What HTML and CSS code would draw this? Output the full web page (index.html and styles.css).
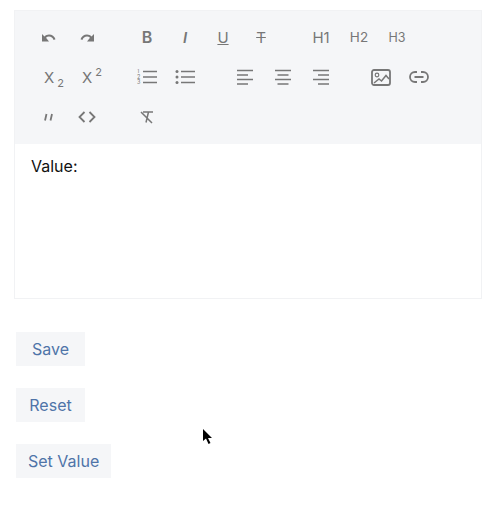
FILE: index.html
```html
<!DOCTYPE html>
<html>
  <head>
    <title>Editor</title>
    <link rel="stylesheet" href="styles.css">
  </head>

  <body>
    <div class="editor">
      <div class="toolbar">
        <!-- history -->
        <div class="group">
          <span class="tool">
            <svg width="16" height="12" viewBox="0 0 16 12"><path d="M1 10.500V3l2.500 2.400C4.800 4.200 6.300 3.500 8 3.500c3 0 5.500 1.900 6.500 4.800l-1.900.7C11.900 6.900 10.100 5.500 8 5.500c-1.200 0-2.200.4-3 1.200l3 3.800z"/></svg>
          </span>
          <span class="tool">
            <svg width="16" height="12" viewBox="0 0 16 12"><path d="M15 10.500V3l-2.500 2.400C11.200 4.200 9.700 3.500 8 3.500c-3 0-5.500 1.900-6.500 4.800l1.900.7C4.100 6.900 5.900 5.500 8 5.500c1.200 0 2.200.4 3 1.200l-3 3.800z"/></svg>
          </span>
        </div>
        <!-- text marks -->
        <div class="group">
          <span class="tool bold">B</span>
          <span class="tool italic">I</span>
          <span class="tool under">U</span>
          <span class="tool strike">T</span>
        </div>
        <!-- headings -->
        <div class="group">
          <span class="tool h1">H1</span>
          <span class="tool h2">H2</span>
          <span class="tool h3">H3</span>
        </div>
        <!-- scripts -->
        <div class="group">
          <span class="tool script"><span>X<span class="sub">2</span></span></span>
          <span class="tool script"><span>X<span class="sup">2</span></span></span>
        </div>
        <!-- lists -->
        <div class="group">
          <span class="tool">
            <svg width="20" height="16" viewBox="0 0 20 16">
              <path class="line" d="M6 2.500h14M6 8h14M6 13.500h14"/>
              <text class="num" x="0" y="4">1</text>
              <text class="num" x="0" y="9.500">2</text>
              <text class="num" x="0" y="15">3</text>
            </svg>
          </span>
          <span class="tool">
            <svg width="20" height="16" viewBox="0 0 20 16">
              <path class="line" d="M6 2.500h14M6 8h14M6 13.500h14"/>
              <circle cx="2" cy="2.500" r="1.500"/>
              <circle cx="2" cy="8" r="1.500"/>
              <circle cx="2" cy="13.500" r="1.500"/>
            </svg>
          </span>
        </div>
        <!-- align -->
        <div class="group">
          <span class="tool">
            <svg width="16" height="16" viewBox="0 0 16 16"><path class="line" d="M0 1.500h16M0 6h11M0 10.500h16M0 15h11"/></svg>
          </span>
          <span class="tool">
            <svg width="16" height="16" viewBox="0 0 16 16"><path class="line" d="M0 1.500h16M2.500 6h11M0 10.500h16M2.500 15h11"/></svg>
          </span>
          <span class="tool">
            <svg width="16" height="16" viewBox="0 0 16 16"><path class="line" d="M0 1.500h16M5 6h11M0 10.500h16M5 15h11"/></svg>
          </span>
        </div>
        <!-- image and link -->
        <div class="group">
          <span class="tool">
            <svg width="20" height="17" viewBox="0 0 20 17">
              <rect class="line heavy" x="1" y="1" width="18" height="15" rx="2"/>
              <circle class="line thin" cx="6" cy="6" r="1.800"/>
              <path class="line" d="M3 14l5-4 2.500 2L15 6.500l3 3.500"/>
            </svg>
          </span>
          <span class="tool">
            <svg width="20" height="14" viewBox="0 0 20 14">
              <path class="line heavy" d="M8 2H6a5 5 0 0 0 0 10h2M12 2h2a5 5 0 0 1 0 10h-2M5.500 7h9"/>
            </svg>
          </span>
        </div>
        <!-- quote and code -->
        <div class="group">
          <span class="tool">
            <svg width="10" height="8" viewBox="0 0 10 8"><path class="line heavy" d="M2.500 1L1 7.500M8 1L6.500 7.500"/></svg>
          </span>
          <span class="tool">
            <svg width="18" height="12" viewBox="0 0 18 12"><path class="line heavy" d="M6.500 1L1.500 6l5 5M11.500 1l5 5-5 5"/></svg>
          </span>
        </div>
        <!-- clear format -->
        <div class="group">
          <span class="tool">
            <svg width="14" height="14" viewBox="0 0 14 14">
              <path class="line" d="M3 2h10M8.500 2L6 12.500M1 2l11 11"/>
            </svg>
          </span>
        </div>
      </div>
      <div class="content">Value:</div>
    </div>

    <div class="actions">
      <button class="btn">Save</button>
      <button class="btn">Reset</button>
      <button class="btn">Set Value</button>
    </div>

    <svg class="cursor" width="11" height="16" viewBox="0 0 11 16"><path d="M0 0v12l3-2.500L5.500 15l2-1-2.500-5h4z"/></svg>
  </body>
</html>
```

FILE: styles.css
```css
body {
  margin: 0;
  padding: 10px 16px 0 14px;
  font-family: Inter, "Liberation Sans", sans-serif;
  background-color: #fff;
}

.editor {
  border: 1px solid #f1f2f4;
  height: 287px;
}

.toolbar {
  display: flex;
  flex-wrap: wrap;
  background-color: #f5f6f8;
  padding: 6px 0 7px 15px;
  height: 120px;
}

.group {
  display: flex;
  margin-right: 22px;
}

.tool {
  display: flex;
  align-items: center;
  justify-content: center;
  width: 38px;
  height: 40px;
  color: #777;
  font-size: 15px;
}

.tool svg {
  fill: #777;
}

.tool .line {
  fill: none;
  stroke: #777;
  stroke-width: 1.5;
}

.tool .heavy {
  stroke-width: 1.8;
}

.tool .thin {
  stroke-width: 1.2;
}

.tool .num {
  font-size: 5.5px;
}

.bold {
  font-weight: 600;
  font-size: 16px;
}

.italic {
  font-style: italic;
  font-weight: 600;
  font-size: 15px;
}

.under {
  text-decoration: underline;
}

.strike {
  text-decoration: line-through;
}

.h1 {
  font-size: 15px;
}

.h2 {
  font-size: 13.5px;
}

.h3 {
  font-size: 12.5px;
}

.script {
  font-size: 15px;
  box-sizing: border-box;
  padding-left: 10px;
}

.script .sub,
.script .sup {
  position: relative;
  font-size: 11px;
  margin-left: 3px;
}

.script .sub {
  top: 4px;
}

.script .sup {
  top: -7px;
}

.content {
  padding: 12px 16px;
  font-size: 16px;
  font-weight: 400;
  color: #111;
}

.actions {
  display: flex;
  flex-direction: column;
  align-items: flex-start;
  gap: 22px;
  margin: 33px 0 0 2px;
}

.btn {
  height: 34px;
  min-width: 69px;
  padding: 0 12px;
  border: none;
  background-color: #f5f6f8;
  color: #4f74a8;
  font-family: inherit;
  font-size: 16px;
}

.cursor {
  position: absolute;
  left: 203px;
  top: 429px;
}
```
